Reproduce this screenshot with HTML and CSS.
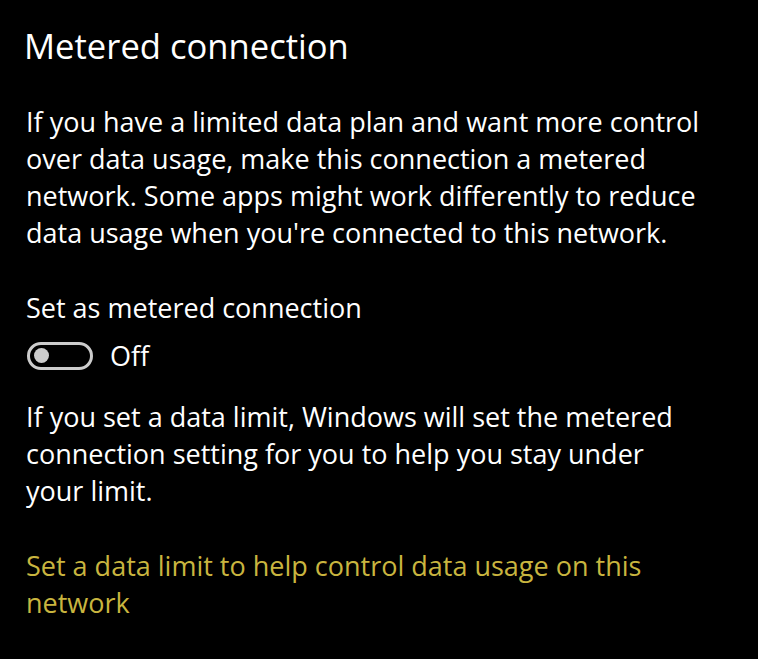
FILE: index.html
```html
<!DOCTYPE html>
<html>
<head>
<meta charset="utf-8">
<link rel="stylesheet" href="styles.css">
</head>
<body>
<main class="page">
  <h1 class="title">Metered connection</h1>
  <p class="desc">If you have a limited data plan and want more control over data usage, make this connection a metered network. Some apps might work differently to reduce data usage when you're connected to this network.</p>
  <div class="setting">
    <div class="label">Set as metered connection</div>
    <div class="toggle-row">
      <span class="toggle"><span class="knob"></span></span>
      <span class="state">Off</span>
    </div>
  </div>
  <p class="desc desc2">If you set a data limit, Windows will set the metered connection setting for you to help you stay under your limit.</p>
  <a class="link" href="#">Set a data limit to help control data usage on this network</a>
</main>
</body>
</html>
```
FILE: styles.css
```css
html, body {
  margin: 0;
  padding: 0;
  background: #000;
  height: 100%;
}
body {
  font-family: "Open Sans", "Noto Sans", sans-serif;
  color: #fff;
}
.page {
  padding: 24px 0 0 26px;
  width: 678px;
}
.title {
  margin: 0 0 0 -2px;
  font-size: 34.6px;
  font-weight: 400;
  line-height: 44px;
}
.desc {
  margin: 35px 0 0 0;
  font-size: 27px;
  line-height: 37px;
}
.setting {
  margin-top: 38px;
}
.label {
  font-size: 27px;
  line-height: 37px;
}
.toggle-row {
  display: flex;
  align-items: center;
  gap: 17px;
  margin-top: 11px;
  padding-left: 1px;
}
.toggle {
  box-sizing: border-box;
  width: 66px;
  height: 28px;
  border: 3px solid #cccccc;
  border-radius: 14px;
  display: flex;
  align-items: center;
  padding-left: 4px;
}
.knob {
  width: 15px;
  height: 15px;
  border-radius: 50%;
  background: #cccccc;
}
.state {
  font-size: 27px;
  line-height: 37px;
}
.desc2 {
  margin-top: 24px;
}
.link {
  display: block;
  margin-top: 38px;
  font-size: 27px;
  line-height: 37px;
  color: #c9b53f;
  text-decoration: none;
}
```
